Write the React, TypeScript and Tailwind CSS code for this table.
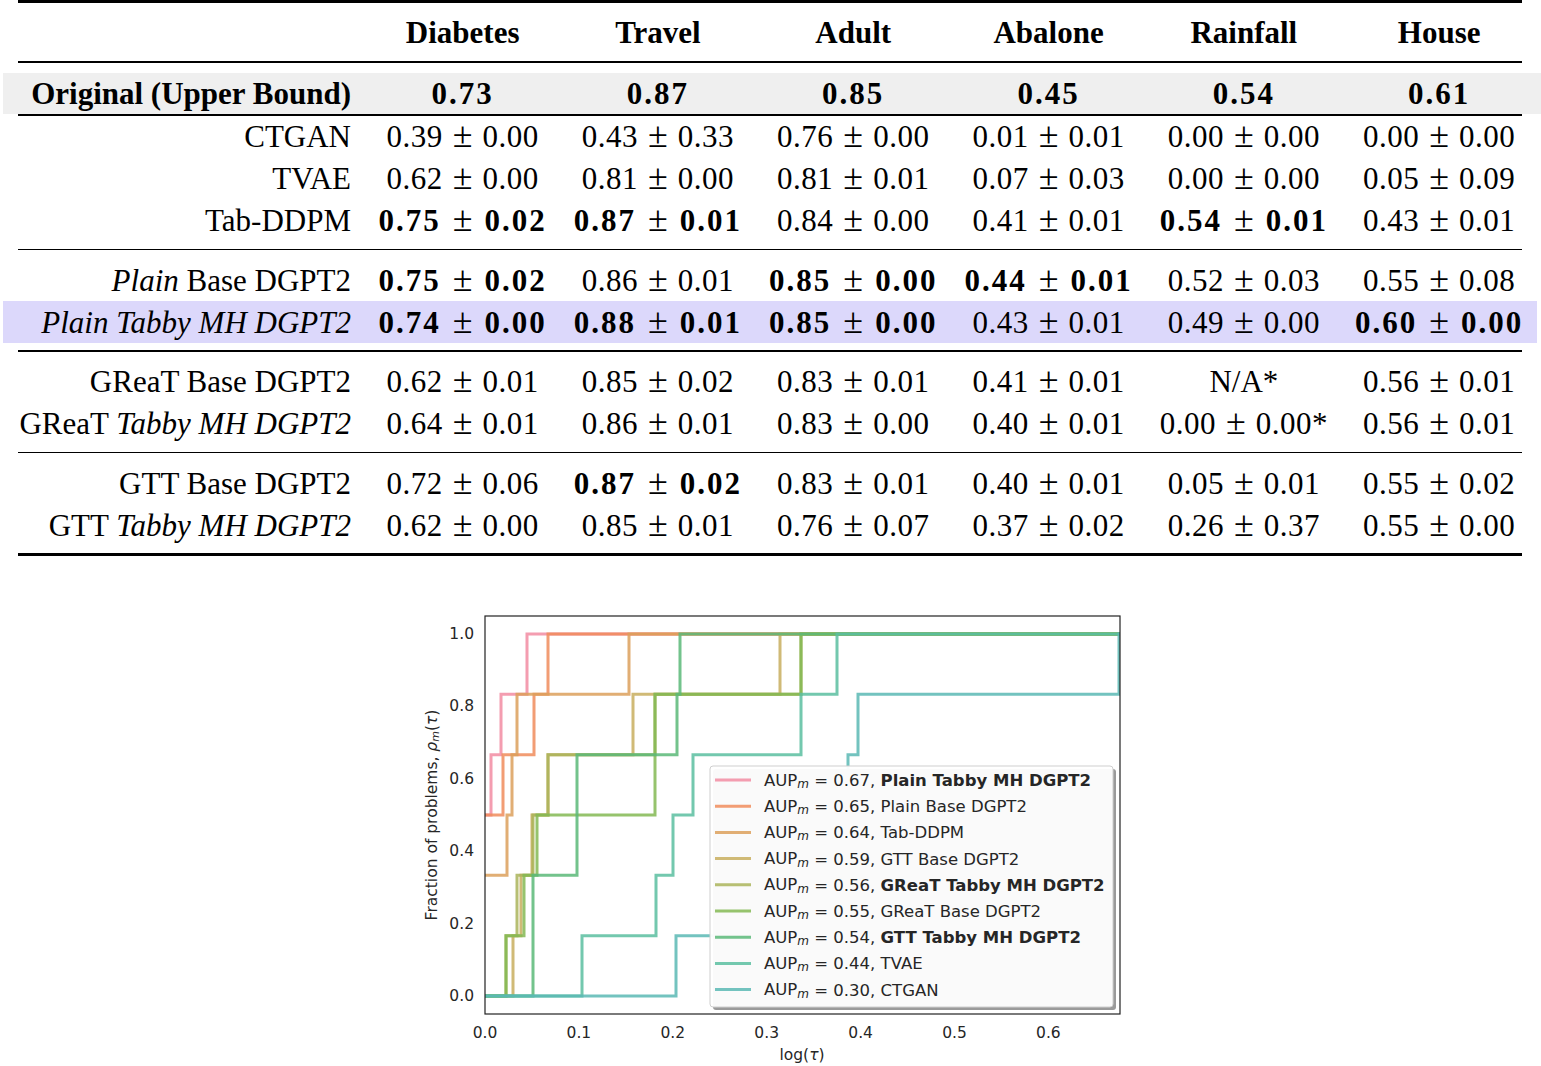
import React from "react"
import clsx from "clsx"

type Cell = { v: string; b?: boolean }

const cols = ["Diabetes", "Travel", "Adult", "Abalone", "Rainfall", "House"]

const c = (s: string): Cell[] =>
  s.split(" ").map((t) => (t.startsWith("b") ? { v: t.slice(1), b: true } : { v: t }))

type Row = { label: React.ReactNode; cells: Cell[]; band?: boolean }

const groups: Row[][] = [
  [
    { label: "CTGAN", cells: c("0.39±0.00 0.43±0.33 0.76±0.00 0.01±0.01 0.00±0.00 0.00±0.00") },
    { label: "TVAE", cells: c("0.62±0.00 0.81±0.00 0.81±0.01 0.07±0.03 0.00±0.00 0.05±0.09") },
    { label: "Tab-DDPM", cells: c("b0.75±0.02 b0.87±0.01 0.84±0.00 0.41±0.01 b0.54±0.01 0.43±0.01") },
  ],
  [
    {
      label: (
        <>
          <i>Plain</i> Base DGPT2
        </>
      ),
      cells: c("b0.75±0.02 0.86±0.01 b0.85±0.00 b0.44±0.01 0.52±0.03 0.55±0.08"),
    },
    {
      label: <i>Plain Tabby MH DGPT2</i>,
      cells: c("b0.74±0.00 b0.88±0.01 b0.85±0.00 0.43±0.01 0.49±0.00 b0.60±0.00"),
      band: true,
    },
  ],
  [
    { label: "GReaT Base DGPT2", cells: c("0.62±0.01 0.85±0.02 0.83±0.01 0.41±0.01 N/A* 0.56±0.01") },
    {
      label: (
        <>
          GReaT <i>Tabby MH DGPT2</i>
        </>
      ),
      cells: c("0.64±0.01 0.86±0.01 0.83±0.00 0.40±0.01 0.00±0.00* 0.56±0.01"),
    },
  ],
  [
    { label: "GTT Base DGPT2", cells: c("0.72±0.06 b0.87±0.02 0.83±0.01 0.40±0.01 0.05±0.01 0.55±0.02") },
    {
      label: (
        <>
          GTT <i>Tabby MH DGPT2</i>
        </>
      ),
      cells: c("0.62±0.00 0.85±0.01 0.76±0.07 0.37±0.02 0.26±0.37 0.55±0.00"),
    },
  ],
]

const grid = "ml-[3px] grid grid-cols-[362px_repeat(6,195.3px)] items-center"

// the ± of the LaTeX table is bigger than the Times one, so it gets its own size
function Value({ cell }: { cell: Cell }) {
  if (!cell.v.includes("±")) return <span>{cell.v}</span>
  const [a, b] = cell.v.split("±")
  const num = cell.b ? "font-bold tracking-[2px]" : "tracking-[0.5px]"
  return (
    <span className="whitespace-nowrap">
      <span className={num}>{a}</span>
      <span className={clsx("text-[36px] leading-[0] font-normal", cell.b ? "mx-[12px]" : "mx-[10px]")}>±</span>
      <span className={num}>{b}</span>
    </span>
  )
}

function Rule({ thick }: { thick?: boolean }) {
  return <div className={clsx("ml-[18px] w-[1504px] bg-black", thick ? "h-[3px]" : "h-[1.5px]")} />
}

function ResultsTable() {
  return (
    <div className="font-['Liberation_Serif',serif] text-[31px] leading-none text-black">
      <Rule thick />
      <div className={clsx(grid, "h-[58px] font-bold")}>
        <div />
        {cols.map((h) => (
          <div key={h} className="text-center">
            {h}
          </div>
        ))}
      </div>
      <Rule />
      <div className={clsx(grid, "mt-[10.5px] h-[41px] w-[1538px] bg-[#efefef] font-bold")}>
        <div className="pr-[14px] text-right">Original (Upper Bound)</div>
        {["0.73", "0.87", "0.85", "0.45", "0.54", "0.61"].map((v, i) => (
          <div key={i} className="text-center tracking-[2px]">
            {v}
          </div>
        ))}
      </div>
      <Rule />
      {groups.map((rows, gi) => (
        <div key={gi}>
          <div className={gi === 0 ? "" : "pt-[9px]"}>
            {rows.map((r, ri) => (
              <div key={ri} className={clsx(grid, "h-[42px]", r.band && "w-[1534px] bg-[#dcd8fb]")}>
                <div className="whitespace-nowrap pr-[14px] text-right">{r.label}</div>
                {r.cells.map((cell, ci) => (
                  <div key={ci} className="text-center">
                    <Value cell={cell} />
                  </div>
                ))}
              </div>
            ))}
          </div>
          <div className="pt-[7px]">
            <Rule thick={gi === groups.length - 1} />
          </div>
        </div>
      ))}
    </div>
  )
}

const X0 = 485
const X1 = 1120
const YT = 616
const YB = 1014
const yOf = (k: number) => 996 - (k * 362) / 6
const xOf = (v: number) => X0 + v * 939

function stepPath(start: number, steps: number[]) {
  let d = `M${X0} ${yOf(start)}`
  let k = start
  for (const s of steps) {
    k += 1
    d += ` H${s} V${yOf(k)}`
  }
  return d + ` H${X1}`
}

const series = [
  { name: "Plain Tabby MH DGPT2", aup: "0.67", bold: true, color: "#f28ca2", start: 3, steps: [491, 501, 527] },
  { name: "Plain Base DGPT2", aup: "0.65", color: "#f08c5c", start: 3, steps: [503, 534, 548] },
  { name: "Tab-DDPM", aup: "0.64", color: "#dca05c", start: 2, steps: [507, 512, 517, 629] },
  { name: "GTT Base DGPT2", aup: "0.59", color: "#c8ae5e", start: 0, steps: [513, 521, 532, 548, 633, 780] },
  { name: "GReaT Tabby MH DGPT2", aup: "0.56", bold: true, color: "#aab45a", start: 0, steps: [506, 517, 533, 548, 655, 801] },
  { name: "GReaT Base DGPT2", aup: "0.55", color: "#84b954", start: 0, steps: [506, 524, 537, 655, 655, 801] },
  { name: "GTT Tabby MH DGPT2", aup: "0.54", bold: true, color: "#5ab978", start: 0, steps: [533, 533, 577, 577, 677, 680] },
  { name: "TVAE", aup: "0.44", color: "#5abea0", start: 0, steps: [582, 656, 673, 693, 801, 837] },
  { name: "CTGAN", aup: "0.30", color: "#5ab9b4", start: 0, steps: [676, 760, 800, 848, 858, 1119] },
]

function PerfProfile() {
  const ink = "#262626"
  return (
    <svg
      width={740}
      height={466}
      viewBox="410 600 740 466"
      className="ml-[410px] mt-[44px] block font-['DejaVu_Sans',sans-serif]"
    >
      <defs>
        <clipPath id="plot">
          <rect x={X0} y={YT} width={X1 - X0} height={YB - YT} />
        </clipPath>
      </defs>
      <rect x={X0} y={YT} width={X1 - X0} height={YB - YT} fill="white" />
      <g clipPath="url(#plot)" fill="none" strokeWidth={3} strokeLinejoin="miter">
        {series.map((s) => (
          <path key={s.name} d={stepPath(s.start, s.steps)} stroke={s.color} strokeOpacity={0.85} />
        ))}
      </g>
      <rect x={X0} y={YT} width={X1 - X0} height={YB - YT} fill="none" stroke="#222" strokeWidth={1.2} />

      <g fontSize={15.5} fill={ink}>
        {[0, 0.2, 0.4, 0.6, 0.8, 1].map((v) => (
          <text key={v} x={474} y={996 - v * 362} textAnchor="end" dominantBaseline="central">
            {v.toFixed(1)}
          </text>
        ))}
        {[0, 0.1, 0.2, 0.3, 0.4, 0.5, 0.6].map((v) => (
          <text key={v} x={xOf(v)} y={1033} textAnchor="middle" dominantBaseline="central">
            {v.toFixed(1)}
          </text>
        ))}
        <text x={802} y={1055} textAnchor="middle" dominantBaseline="central">
          log(<tspan fontStyle="italic">τ</tspan>)
        </text>
        <text x={432} y={815} textAnchor="middle" dominantBaseline="central" transform="rotate(-90 432 815)">
          Fraction of problems, <tspan fontStyle="italic">ρ</tspan>
          <tspan fontStyle="italic" fontSize={11} dy={3}>
            m
          </tspan>
          <tspan dy={-3}>(</tspan>
          <tspan fontStyle="italic">τ</tspan>)
        </text>
      </g>

      {/* legend */}
      <rect x={713} y={769} width={403} height={241} rx={3} fill="#9a9a9a" />
      <rect x={710} y={766} width={403} height={241} rx={3} fill="white" fillOpacity={0.95} stroke="#cfcfcf" />
      <g fontSize={16.5} fill={ink} className="whitespace-pre">
        {series.map((s, i) => {
          const y = 780 + i * 26.2
          return (
            <g key={s.name}>
              <line x1={715} x2={751} y1={y} y2={y} stroke={s.color} strokeWidth={3} strokeOpacity={0.85} />
              <text x={764} y={y} dominantBaseline="central">
                AUP
                <tspan fontStyle="italic" fontSize={12} dy={4}>
                  m
                </tspan>
                <tspan dy={-4}>{` = ${s.aup}, `}</tspan>
                <tspan fontWeight={s.bold ? "bold" : "normal"}>{s.name}</tspan>
              </text>
            </g>
          )
        })}
      </g>
    </svg>
  )
}

export default function App() {
  return (
    <div className="w-[1541px] bg-white">
      <ResultsTable />
      <PerfProfile />
    </div>
  )
}
